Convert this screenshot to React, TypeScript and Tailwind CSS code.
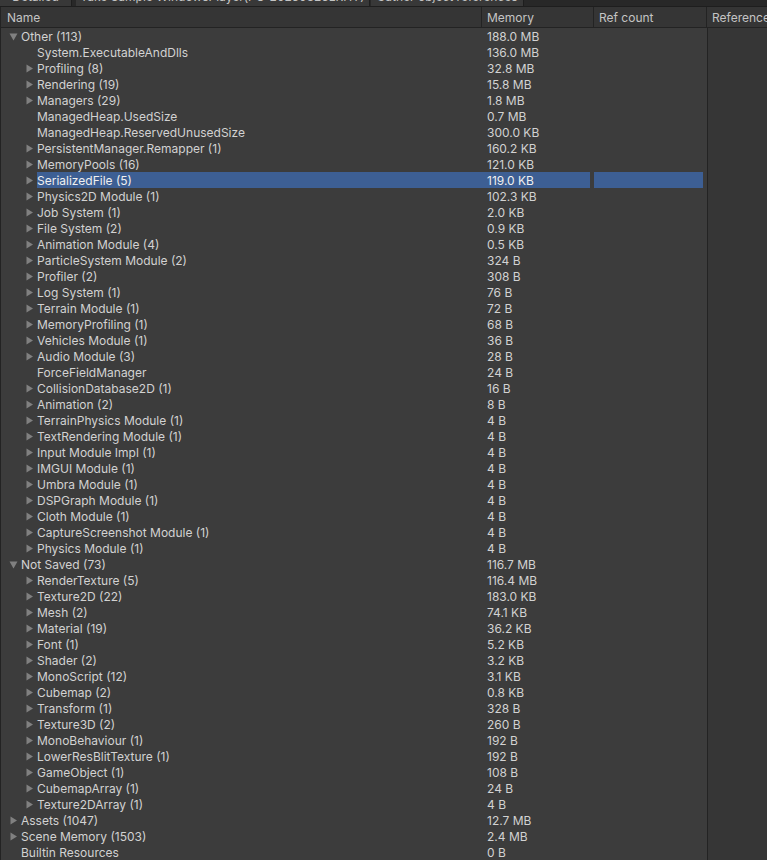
type Row = [number, 'open' | 'closed' | 'leaf', string, string];

const ROWS: Row[] = [
  [0, 'open', 'Other (113)', '188.0 MB'],
  [1, 'leaf', 'System.ExecutableAndDlls', '136.0 MB'],
  [1, 'closed', 'Profiling (8)', '32.8 MB'],
  [1, 'closed', 'Rendering (19)', '15.8 MB'],
  [1, 'closed', 'Managers (29)', '1.8 MB'],
  [1, 'leaf', 'ManagedHeap.UsedSize', '0.7 MB'],
  [1, 'leaf', 'ManagedHeap.ReservedUnusedSize', '300.0 KB'],
  [1, 'closed', 'PersistentManager.Remapper (1)', '160.2 KB'],
  [1, 'closed', 'MemoryPools (16)', '121.0 KB'],
  [1, 'closed', 'SerializedFile (5)', '119.0 KB'],
  [1, 'closed', 'Physics2D Module (1)', '102.3 KB'],
  [1, 'closed', 'Job System (1)', '2.0 KB'],
  [1, 'closed', 'File System (2)', '0.9 KB'],
  [1, 'closed', 'Animation Module (4)', '0.5 KB'],
  [1, 'closed', 'ParticleSystem Module (2)', '324 B'],
  [1, 'closed', 'Profiler (2)', '308 B'],
  [1, 'closed', 'Log System (1)', '76 B'],
  [1, 'closed', 'Terrain Module (1)', '72 B'],
  [1, 'closed', 'MemoryProfiling (1)', '68 B'],
  [1, 'closed', 'Vehicles Module (1)', '36 B'],
  [1, 'closed', 'Audio Module (3)', '28 B'],
  [1, 'leaf', 'ForceFieldManager', '24 B'],
  [1, 'closed', 'CollisionDatabase2D (1)', '16 B'],
  [1, 'closed', 'Animation (2)', '8 B'],
  [1, 'closed', 'TerrainPhysics Module (1)', '4 B'],
  [1, 'closed', 'TextRendering Module (1)', '4 B'],
  [1, 'closed', 'Input Module Impl (1)', '4 B'],
  [1, 'closed', 'IMGUI Module (1)', '4 B'],
  [1, 'closed', 'Umbra Module (1)', '4 B'],
  [1, 'closed', 'DSPGraph Module (1)', '4 B'],
  [1, 'closed', 'Cloth Module (1)', '4 B'],
  [1, 'closed', 'CaptureScreenshot Module (1)', '4 B'],
  [1, 'closed', 'Physics Module (1)', '4 B'],
  [0, 'open', 'Not Saved (73)', '116.7 MB'],
  [1, 'closed', 'RenderTexture (5)', '116.4 MB'],
  [1, 'closed', 'Texture2D (22)', '183.0 KB'],
  [1, 'closed', 'Mesh (2)', '74.1 KB'],
  [1, 'closed', 'Material (19)', '36.2 KB'],
  [1, 'closed', 'Font (1)', '5.2 KB'],
  [1, 'closed', 'Shader (2)', '3.2 KB'],
  [1, 'closed', 'MonoScript (12)', '3.1 KB'],
  [1, 'closed', 'Cubemap (2)', '0.8 KB'],
  [1, 'closed', 'Transform (1)', '328 B'],
  [1, 'closed', 'Texture3D (2)', '260 B'],
  [1, 'closed', 'MonoBehaviour (1)', '192 B'],
  [1, 'closed', 'LowerResBlitTexture (1)', '192 B'],
  [1, 'closed', 'GameObject (1)', '108 B'],
  [1, 'closed', 'CubemapArray (1)', '24 B'],
  [1, 'closed', 'Texture2DArray (1)', '4 B'],
  [0, 'closed', 'Assets (1047)', '12.7 MB'],
  [0, 'closed', 'Scene Memory (1503)', '2.4 MB'],
  [0, 'leaf', 'Builtin Resources', '0 B'],
];

const SELECTED = 'SerializedFile (5)';

const Arrow = ({ state }: { state: Row[1] }) => {
  if (state === 'leaf') return <span className="w-[16px] shrink-0" />;
  return (
    <span className="flex w-[16px] shrink-0 items-center justify-center">
      <svg width="9" height="9" viewBox="0 0 9 9">
        {state === 'open' ? (
          <path d="M0.5 1.5 L8.5 1.5 L4.5 8.5 Z" fill="#808080" />
        ) : (
          <path d="M1.5 0.5 L8 4.5 L1.5 8.5 Z" fill="#808080" />
        )}
      </svg>
    </span>
  );
};

const Tabs = () => (
  <div className="flex h-[7px] overflow-hidden bg-[#282828] border-b border-[#1e1e1e]">
    <div className="flex w-[71px] justify-center overflow-hidden bg-[#383838]">
      <span className="mt-[-10px] leading-[14px] text-[#c4c4c4]">Detailed</span>
    </div>
    <div className="w-[5px] border-l border-[#1e1e1e]" />
    <div className="flex w-[294px] justify-center overflow-hidden bg-[#383838] border-r border-[#1e1e1e]">
      <span className="mt-[-10px] leading-[14px] text-[#c4c4c4]">Take Sample WindowsPlayer(PC-20250325LRHY)</span>
    </div>
    <div className="ml-[1px] flex w-[153px] justify-center overflow-hidden bg-[#383838] border-r border-[#1e1e1e]">
      <span className="mt-[-10px] leading-[14px] text-[#c4c4c4]">Gather object references</span>
    </div>
  </div>
);

const Header = () => (
  <div className="flex h-[21px] bg-[#353535] border-b border-[#232323] border-l border-l-[#232323] text-[#c4c4c4]">
    <div className="flex w-[481px] items-center pt-[2px] pl-[6px] border-r border-[#232323]">Name</div>
    <div className="flex w-[112px] items-center pt-[2px] pl-[5px] border-r border-[#232323]">Memory</div>
    <div className="flex w-[113px] items-center pt-[2px] pl-[5px] border-r border-[#232323]">Ref count</div>
    <div className="flex flex-1 items-center pt-[2px] whitespace-nowrap overflow-hidden pl-[5px]">References</div>
  </div>
);

export default function App() {
  return (
    <div
      className="h-[860px] w-[767px] overflow-hidden bg-[#3c3c3c] text-[12px]"
      style={{ fontFamily: 'Inter, "Noto Sans", sans-serif' }}
    >
      <Tabs />
      <Header />
      <div className="flex">
        <div className="w-[707px] border-l border-[#232323]">
          {ROWS.map(([level, state, name, mem]) => {
            const sel = name === SELECTED;
            return (
              <div key={name} className="flex h-[16px] items-center text-[#d2d2d2] whitespace-nowrap">
                <div className="flex h-[16px] w-[480px] items-center" style={{ paddingLeft: 4 + level * 16 }}>
                  <Arrow state={state} />
                  <div className={`flex h-[16px] flex-1 items-center pt-[2px] ${sel ? 'bg-[#3d5f94] text-[#f0f0f0]' : ''}`}>
                    {name}
                  </div>
                </div>
                <div className={`flex h-[16px] w-[109px] items-center pt-[2px] pl-[6px] ${sel ? 'bg-[#3d5f94] text-[#f0f0f0]' : ''}`}>
                  {mem}
                </div>
                <div className="w-[4px]" />
                <div className={`h-[16px] w-[109px] ${sel ? 'bg-[#3d5f94]' : ''}`} />
              </div>
            );
          })}
        </div>
        <div className="h-[840px] flex-1 bg-[#363636] border-l border-[#232323]" />
      </div>
    </div>
  );
}
